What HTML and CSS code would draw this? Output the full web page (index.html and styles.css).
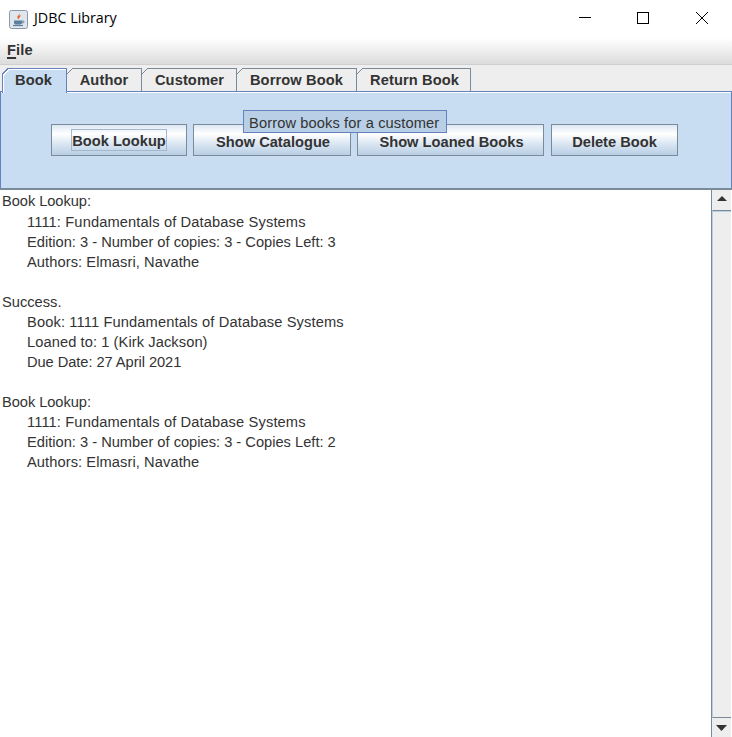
FILE: index.html
```html
<!DOCTYPE html>
<html lang="en">
<head>
<meta charset="utf-8">
<title>JDBC Library</title>
<link rel="stylesheet" href="styles.css">
</head>
<body>
<div class="window">
  <header class="titlebar">
    <div class="title-left">
      <span class="app-icon">
        <svg width="19" height="19" viewBox="0 0 19 19">
          <rect x="0.5" y="0.5" width="18" height="18" rx="2" fill="#dfe6ee" stroke="#8a98a8"/>
          <path d="M10 3c1 2-2.500 3-1.500 5 .4.800 1 1 1.300 1.500-.2-1 .2-1.500 1-2.300.8-.8 1-1.800.3-2.700.1 1-.5 1.500-1 2C10.600 5.500 10.800 4.300 10 3z" fill="#e2661c"/>
          <path d="M5 10.500h8v2.200c0 1.100-1 1.800-2 1.800H7c-1 0-2-.7-2-1.800z" fill="#5d7d9a"/>
          <path d="M13 11h1.300c.9 0 .9 1.800-.3 1.800h-1" fill="none" stroke="#5d7d9a"/>
          <path d="M4 15.500h10" stroke="#5d7d9a" stroke-width="1.200"/>
        </svg>
      </span>
      <span class="app-name">JDBC Library</span>
    </div>
    <div class="win-controls">
      <svg class="win-btn" width="58" height="38" viewBox="0 0 58 38"><path d="M21 17.500h12" stroke="#000" fill="none"/></svg>
      <svg class="win-btn" width="58" height="38" viewBox="0 0 58 38"><rect x="21.500" y="12.500" width="11" height="11" stroke="#000" fill="none"/></svg>
      <svg class="win-btn" width="58" height="38" viewBox="0 0 58 38"><path d="M22 12l12 12M34 12L22 24" stroke="#000" fill="none"/></svg>
    </div>
  </header>

  <nav class="menubar"><span class="menu-item"><u>F</u>ile</span></nav>

  <div class="tabstrip">
    <span class="tab tab-active tab-book">Book</span>
    <span class="tab tab-author">Author</span>
    <span class="tab tab-customer">Customer</span>
    <span class="tab tab-borrow">Borrow Book</span>
    <span class="tab tab-return">Return Book</span>
  </div>

  <section class="panel">
    <button class="btn btn-lookup"><span class="focus">Book Lookup</span></button>
    <button class="btn btn-catalogue">Show Catalogue</button>
    <button class="btn btn-loaned">Show Loaned Books</button>
    <button class="btn btn-delete">Delete Book</button>
    <div class="tooltip">Borrow books for a customer</div>
  </section>

  <main class="output">
    <div class="log">
      <div class="entry">
        <p class="tight first">Book Lookup:</p>
        <p class="ind wide">1111: Fundamentals of Database Systems</p>
        <p class="ind">Edition: 3 - Number of copies: 3 - Copies Left: 3</p>
        <p class="ind mid">Authors: Elmasri, Navathe</p>
      </div>
      <div class="entry">
        <p>Success.</p>
        <p class="ind wide">Book: 1111 Fundamentals of Database Systems</p>
        <p class="ind mid">Loaned to: 1 (Kirk Jackson)</p>
        <p class="ind tight">Due Date: 27 April 2021</p>
      </div>
      <div class="entry">
        <p class="tight">Book Lookup:</p>
        <p class="ind wide">1111: Fundamentals of Database Systems</p>
        <p class="ind">Edition: 3 - Number of copies: 3 - Copies Left: 2</p>
        <p class="ind mid">Authors: Elmasri, Navathe</p>
      </div>
    </div>
    <aside class="scrollbar">
      <div class="arrow arrow-up"><svg width="10" height="5" viewBox="0 0 10 5"><path d="M5 0l5 5H0z" fill="#333"/></svg></div>
      <div class="thumb"></div>
      <div class="arrow arrow-down"><svg width="11" height="6" viewBox="0 0 11 6"><path d="M0 0h11L5.500 6z" fill="#333"/></svg></div>
    </aside>
  </main>
</div>
</body>
</html>
```
FILE: styles.css
```css
* { box-sizing: border-box; }
html, body { margin: 0; padding: 0; height: 100%; overflow: hidden; }
body { background: #eeeeee; font-family: "Liberation Sans", Arial, sans-serif; color: #333333; }
.window { width: 732px; height: 737px; display: flex; flex-direction: column; }

.titlebar { height: 38px; background: #ffffff; display: flex; justify-content: space-between; flex: none; }
.title-left { display: flex; align-items: center; padding-left: 9px; gap: 6px; }
.app-icon { display: flex; width: 19px; height: 19px; }
.app-name { font-family: "Open Sans", "Noto Sans", sans-serif; font-size: 14.300px; color: #000000; padding-bottom: 3px; }
.win-controls { display: flex; }
.win-btn { display: block; }

.menubar { height: 26px; flex: none; background: linear-gradient(#ffffff, #dcdcdc); padding: 3px 0 0 7px; font-weight: bold; font-size: 14.670px; }
.menu-item { display: inline-block; line-height: 18px; letter-spacing: .15px; }
.menu-item u { text-decoration-thickness: 2px; text-underline-offset: 2px; }

.tabstrip { height: 28px; flex: none; display: flex; align-items: flex-end; padding-left: 2px; border-top: 1px solid #cfcfcf; background: #eeeeee; position: relative; border-bottom: 1px solid #6382bf; }
.tab { height: 24px; margin-bottom: -1px; border: 1px solid #7a8a99; border-left: 0; border-bottom: 1px solid #6382bf; background: #eeeeee; font-size: 14.670px; font-weight: bold; line-height: 22px; letter-spacing: .1px; text-align: center; position: relative; }
.tab::before { content: ""; position: absolute; left: 0; top: -1px; width: 6px; height: 6px; background: linear-gradient(135deg, #eeeeee 0 42%, #7a8a99 42% 58%, transparent 58%); }
.tab-book { width: 65px; }
.tab-author { width: 75px; }
.tab-customer { width: 95px; padding-left: 1px; }
.tab-borrow { width: 120px; }
.tab-return { width: 114px; padding-left: 2px; }
.tab-active { height: 25px; margin-bottom: -2px; padding-right: 2px; background: #c8ddf2; border-color: #6382bf; border-left: 1px solid #6382bf; border-bottom: 0; box-shadow: inset 1px 1px #ffffff; z-index: 1; }
.tab-active::before { width: 7px; height: 7px; background: linear-gradient(135deg, #eeeeee 0 40%, #6382bf 40% 55%, #ffffff 55% 68%, transparent 68%); left: -1px; }

.panel { height: 96px; flex: none; background: #c8ddf2; border-left: 1px solid #6382bf; border-right: 1px solid #6382bf; box-shadow: inset 0 1px #ffffff; position: relative; display: flex; gap: 6px; padding: 32px 0 0 50px; align-items: flex-start; }
.btn { height: 32px; padding: 3px 0 0 2px; border: 1px solid #7a8a99; background: linear-gradient(#dde8f3, #ffffff 30%, #dde8f3 60%, #b8cfe5); font: bold 14.670px "Liberation Sans", Arial, sans-serif; color: #333333; display: flex; align-items: center; justify-content: center; }
.btn-lookup { width: 136px; padding: 4px 0 0; align-items: flex-start; }
.btn-catalogue { width: 158px; }
.btn-loaned { width: 187px; }
.btn-delete { width: 127px; margin-left: 1px; padding-left: 0; }
.focus { display: block; width: 96px; height: 22px; line-height: 23px; border: 1px solid #a3b8cc; }
.tooltip { position: absolute; left: 242px; top: 18px; width: 204px; height: 23px; border: 1px solid #6382bf; background: #b8cfe5; font-size: 14.670px; line-height: 24px; letter-spacing: .11px; padding-left: 5px; white-space: nowrap; }

.output { flex: 1; min-height: 0; display: flex; background: #ffffff; border-top: 2px solid #7a8a99; }
.log { flex: 1; padding: 2px 0 0 2px; font-size: 14.670px; line-height: 20px; color: #333333; }
.log p { margin: 0; height: 20px; white-space: nowrap; }
.log .first { margin: -1px 0 1px; }
.entry { margin-bottom: 20px; }
.ind { padding-left: 25px; }
.wide { letter-spacing: .13px; }
.mid { letter-spacing: .08px; }
.tight { letter-spacing: -.06px; }

.scrollbar { width: 20px; margin-right: 1px; background: #eeeeee; border-left: 1px solid #7a8a99; display: flex; flex-direction: column; }
.arrow { flex: none; display: flex; justify-content: center; background: #eeeeee; }
.arrow-up { height: 20px; padding-top: 6px; }
.arrow-down { height: 19px; padding-top: 7px; }
.thumb { flex: 1; background: #eeeeee; border-left: 1px solid #b8cfe5; border-top: 1px solid #7a8a99; box-shadow: inset 0 1px #b8cfe5; border-bottom: 1px solid #7a8a99; }
```
